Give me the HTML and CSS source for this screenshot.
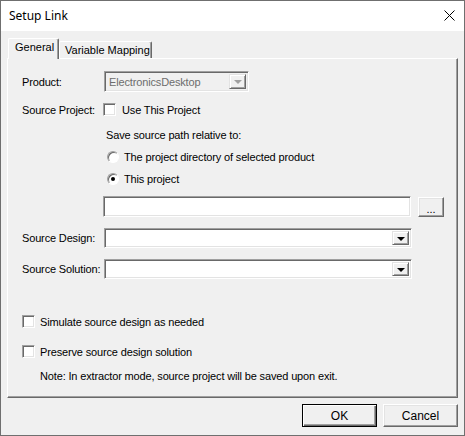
FILE: index.html
```html
<!DOCTYPE html>
<html lang="en">
<head>
    <meta charset="UTF-8">
    <title>Setup Link</title>
    <link rel="stylesheet" href="styles.css">
</head>
<body>
    <div class="window">
        <div class="titlebar">
            <span class="title">Setup Link</span>
            <svg class="close" width="11" height="11" viewBox="0 0 11 11">
                <path d="M0.5 0.5 L10.5 10.5 M10.5 0.5 L0.5 10.5" stroke="#000" stroke-width="1" fill="none"/>
            </svg>
        </div>
        <div class="content">
            <div class="tabs">
                <div class="tab active">General</div>
                <div class="tab">Variable Mapping</div>
            </div>
            <div class="panel">
                <div class="row row-product">
                    <span class="label">Product:</span>
                    <div class="combo disabled short">
                        <span class="combo-text">ElectronicsDesktop</span>
                        <span class="drop"><i class="arrow"></i></span>
                    </div>
                </div>
                <div class="row row-project">
                    <span class="label narrow">Source Project:</span>
                    <span class="check"></span>
                    <span class="check-text">Use This Project</span>
                </div>
                <div class="row row-save">Save source path relative to:</div>
                <div class="row row-radio first">
                    <span class="radio"></span>
                    <span class="radio-text">The project directory of selected product</span>
                </div>
                <div class="row row-radio">
                    <span class="radio on"></span>
                    <span class="radio-text">This project</span>
                </div>
                <div class="row row-path">
                    <div class="textbox"></div>
                    <button class="btn browse">...</button>
                </div>
                <div class="row row-design">
                    <span class="label">Source Design:</span>
                    <div class="combo">
                        <span class="combo-text"></span>
                        <span class="drop"><i class="arrow"></i></span>
                    </div>
                </div>
                <div class="row row-solution">
                    <span class="label">Source Solution:</span>
                    <div class="combo">
                        <span class="combo-text"></span>
                        <span class="drop"><i class="arrow"></i></span>
                    </div>
                </div>
                <div class="row row-simulate">
                    <span class="check"></span>
                    <span class="opt-text">Simulate source design as needed</span>
                </div>
                <div class="row row-preserve">
                    <span class="check"></span>
                    <span class="opt-text">Preserve source design solution</span>
                </div>
                <div class="row row-note">Note: In extractor mode, source project will be saved upon exit.</div>
            </div>
            <div class="footer">
                <button class="btn default">OK</button>
                <button class="btn">Cancel</button>
            </div>
        </div>
    </div>
</body>
</html>
```

FILE: styles.css
```css
body, html {
    margin: 0;
    padding: 0;
    font-family: "Liberation Sans", Arial, sans-serif;
    font-size: 11px;
    letter-spacing: -0.15px;
    color: #000;
    background: #fff;
}
.window {
    width: 465px;
    height: 436px;
    box-sizing: border-box;
    border: 1px solid #6f6f6f;
    background-color: #f0f0f0;
    display: flex;
    flex-direction: column;
}
.titlebar {
    height: 30px;
    background-color: #fff;
    display: flex;
    align-items: center;
    justify-content: space-between;
    padding: 0 9px 0 8px;
}
.title {
    font-family: "Noto Sans", sans-serif;
    font-size: 12px;
    letter-spacing: 0;
    margin-top: -1px;
}
.close {
    margin-top: -2px;
}
.content {
    flex: 1;
    padding: 7px 6px 0 6px;
    display: flex;
    flex-direction: column;
}
.tabs {
    display: flex;
    align-items: flex-end;
    height: 20px;
    padding-left: 1px;
}
.tab {
    box-sizing: border-box;
    height: 17px;
    width: 93px;
    border-top: 1px solid #fff;
    border-left: 1px solid #fff;
    border-right: 1px solid #696969;
    box-shadow: inset -1px 0 #a0a0a0;
    border-radius: 2px 2px 0 0;
    padding: 2px 0 0 5px;
    background-color: #f0f0f0;
    letter-spacing: 0;
    white-space: nowrap;
}
.tab.active {
    height: 21px;
    width: 51px;
    margin-bottom: -1px;
    position: relative;
    z-index: 1;
    padding: 2px 0 0 6px;
}
.panel {
    box-sizing: border-box;
    height: 340px;
    width: 451px;
    border: 1px solid;
    border-color: #fff #696969 #696969 #fff;
    box-shadow: inset -1px -1px #a0a0a0;
    padding-left: 14px;
    display: flex;
    flex-direction: column;
}
.row {
    display: flex;
    align-items: center;
    height: 14px;
    white-space: nowrap;
}
.label {
    width: 82px;
    flex-shrink: 0;
}
.label.narrow {
    width: 81px;
}
.row-product { height: 21px; margin-top: 12px; }
.row-project { height: 13px; margin-top: 11px; }
.row-save { margin-top: 12px; padding-left: 84px; }
.row-radio { margin-top: 8px; padding-left: 85px; }
.row-path { height: 21px; margin-top: 10px; padding-left: 81px; }
.row-design { height: 20px; margin-top: 11px; }
.row-solution { height: 20px; margin-top: 11px; }
.row-simulate { height: 13px; margin-top: 36px; }
.row-preserve { height: 13px; margin-top: 17px; }
.row-note { margin-top: 11px; padding-left: 18px; }

.check {
    box-sizing: border-box;
    width: 13px;
    height: 13px;
    flex-shrink: 0;
    background-color: #fff;
    border: 1px solid;
    border-color: #a0a0a0 #fff #fff #a0a0a0;
    box-shadow: inset 1px 1px #696969, inset -1px -1px #e3e3e3;
}
.check-text {
    margin-left: 6px;
}
.opt-text {
    margin-left: 5px;
}
.radio {
    box-sizing: border-box;
    width: 12px;
    height: 12px;
    flex-shrink: 0;
    border-radius: 50%;
    background-color: #fff;
    border: 1px solid;
    border-color: #a0a0a0 #fff #fff #a0a0a0;
    box-shadow: inset 1px 1px #696969;
    display: flex;
    align-items: center;
    justify-content: center;
}
.radio.on::after {
    content: "";
    width: 4px;
    height: 4px;
    border-radius: 50%;
    background-color: #000;
}
.radio-text {
    margin-left: 5px;
}
.textbox, .combo {
    box-sizing: border-box;
    height: 100%;
    background-color: #fff;
    border: 1px solid;
    border-color: #a0a0a0 #fff #fff #a0a0a0;
    box-shadow: inset 1px 1px #696969, inset -1px -1px #e3e3e3;
}
.textbox {
    width: 308px;
}
.combo {
    width: 308px;
    display: flex;
    align-items: stretch;
    padding: 2px;
}
.combo.short {
    width: 145px;
}
.combo.disabled {
    background-color: #f0f0f0;
    color: #6d6d6d;
}
.combo-text {
    flex: 1;
    padding: 2px 0 0 2px;
}
.drop {
    box-sizing: border-box;
    width: 17px;
    background-color: #f0f0f0;
    border: 1px solid;
    border-color: #e3e3e3 #696969 #696969 #e3e3e3;
    box-shadow: inset 1px 1px #fff, inset -1px -1px #a0a0a0;
    display: flex;
    align-items: center;
    justify-content: center;
}
.arrow {
    width: 0;
    height: 0;
    border-left: 4px solid transparent;
    border-right: 4px solid transparent;
    border-top: 4px solid #000;
    margin-top: 1px;
}
.disabled .arrow {
    border-top-color: #a0a0a0;
}
.btn {
    box-sizing: border-box;
    font-family: "Liberation Sans", Arial, sans-serif;
    font-size: 11px;
    color: #000;
    background-color: #f0f0f0;
    border: 1px solid;
    border-color: #fff #696969 #696969 #fff;
    box-shadow: inset -1px -1px #a0a0a0, inset 1px 1px #e3e3e3;
    padding: 0;
    margin: 0;
}
.browse {
    width: 26px;
    height: 20px;
    margin-left: 7px;
    margin-top: 1px;
    padding-top: 3px;
}
.footer {
    display: flex;
    justify-content: flex-end;
    gap: 6px;
    padding-top: 6px;
}
.footer .btn {
    width: 75px;
    height: 23px;
    font-size: 12px;
}
.btn.default {
    border-color: #000;
    box-shadow: inset 1px 1px #fff, inset -1px -1px #696969, inset -2px -2px #a0a0a0;
}
```
